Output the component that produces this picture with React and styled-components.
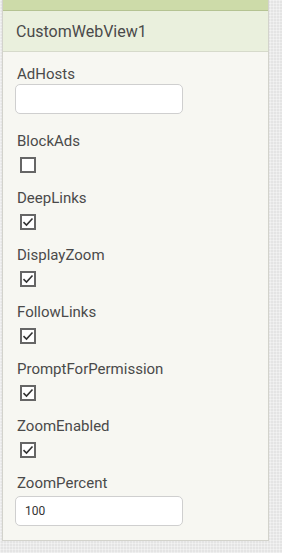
import React from "react";
import styled, { createGlobalStyle } from "styled-components";

const Global = createGlobalStyle`
  html, body { margin: 0; padding: 0; }
  body {
    background: #e7e7e7;
    font-family: Roboto, "Noto Sans", Arial, sans-serif;
    width: 282px;
    height: 553px;
    overflow: hidden;
  }
`;

const Page = styled.div`
  padding: 0 13px 11px 2px;
  background:
    repeating-linear-gradient(0deg, rgba(255,255,255,0.35) 0 1px, transparent 1px 3px),
    repeating-linear-gradient(90deg, rgba(255,255,255,0.35) 0 1px, transparent 1px 3px),
    #e4e4e4;
  min-height: 553px;
  box-sizing: border-box;
`;

const Panel = styled.div`
  background: #f7f7f2;
  border: 1px solid #d3d3cc;
  border-top: none;
  box-sizing: border-box;
`;

const TopBar = styled.div`
  height: 10px;
  background: #cddba9;
  border-bottom: 1px solid #b5c392;
`;

const Header = styled.div`
  height: 40px;
  display: flex;
  align-items: center;
  padding-left: 13px;
  background: #eaf0dd;
  border-bottom: 1px solid #d6dacb;
  font-size: 16px;
  color: #4a4a4a;
`;

const Body = styled.div`
  display: flex;
  flex-direction: column;
  padding: 13px 0 14px 12px;
`;

const Prop = styled.div`
  display: flex;
  flex-direction: column;
  align-items: flex-start;
  margin-top: ${(p) => p.$top ?? 16}px;
`;

const Label = styled.div`
  font-size: 15px;
  line-height: 18px;
  color: #4a4a4a;
  padding-left: 2px;
`;

const TextInput = styled.div`
  margin-top: ${(p) => p.$gap}px;
  width: 168px;
  height: 30px;
  box-sizing: border-box;
  border: 1px solid #cfcfcf;
  border-radius: 5px;
  background: #fff;
  font-size: 12px;
  color: #333;
  display: flex;
  align-items: center;
  padding-left: 9px;
`;

const Box = styled.div`
  margin-top: 7px;
  margin-left: 5px;
  width: 16px;
  height: 16px;
  box-sizing: border-box;
  border: 2px solid #666;
  background: #fff;
  display: flex;
  align-items: center;
  justify-content: center;
`;

const Check = ({ on }) => (
  <Box>
    {on && (
      <svg width="12" height="12" viewBox="0 0 12 12">
        <path d="M1.5 6.2 L4.5 9 L10.5 2.5" fill="none" stroke="#333" strokeWidth="1.6" />
      </svg>
    )}
  </Box>
);

const checks = [
  ["BlockAds", false],
  ["DeepLinks", true],
  ["DisplayZoom", true],
  ["FollowLinks", true],
  ["PromptForPermission", true],
  ["ZoomEnabled", true],
];

export default function App() {
  return (
    <>
      <Global />
      <Page>
        <Panel>
          <TopBar />
          <Header>CustomWebView1</Header>
          <Body>
            <Prop $top={0}>
              <Label>AdHosts</Label>
              <TextInput $gap={1} />
            </Prop>
            {checks.map(([name, on], i) => (
              <Prop key={name} $top={i === 0 ? 18 : 16}>
                <Label>{name}</Label>
                <Check on={on} />
              </Prop>
            ))}
            <Prop>
              <Label>ZoomPercent</Label>
              <TextInput $gap={4}>100</TextInput>
            </Prop>
          </Body>
        </Panel>
      </Page>
    </>
  );
}
